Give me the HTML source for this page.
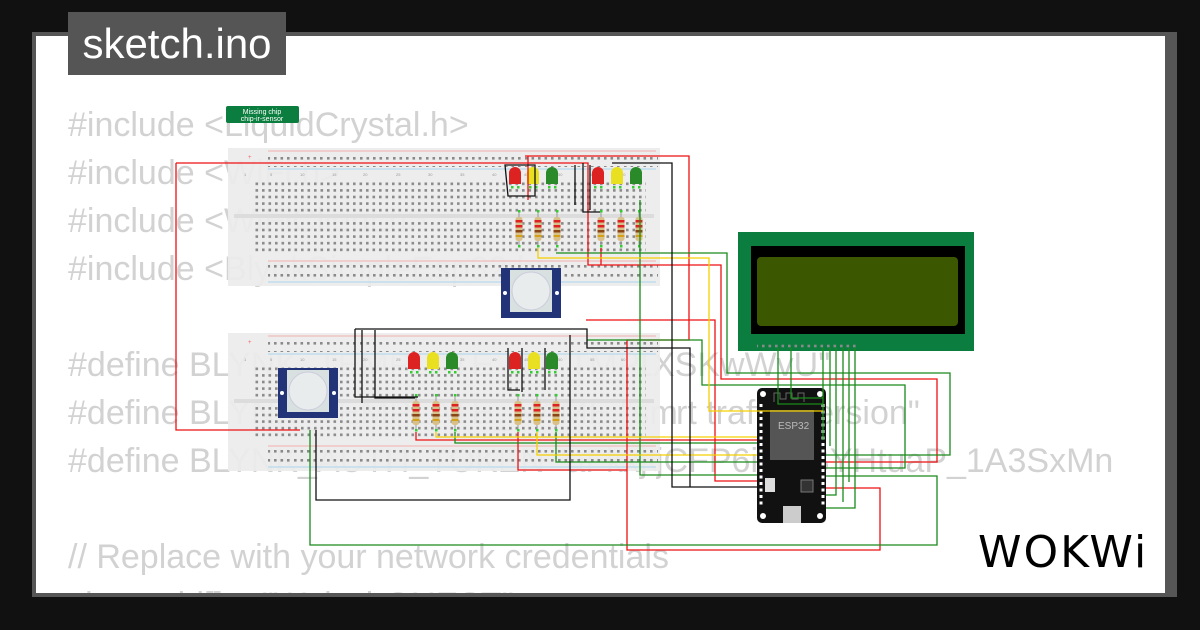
<!DOCTYPE html>
<html><head><meta charset="utf-8"><style>
html,body{margin:0;padding:0;background:#111;width:1200px;height:630px;overflow:hidden;font-family:"Liberation Sans",sans-serif}
.frame{position:absolute;left:32px;top:32px;width:1145px;height:565px;background:#565656}
.white{position:absolute;left:36px;top:36px;width:1129px;height:557px;background:#fff;overflow:hidden}
.tab{position:absolute;left:68px;top:12px;width:218px;height:63px;background:#555;color:#fff;font-size:42px;line-height:63px;text-align:center}
.code{position:absolute;color:#d2d2d2;font-size:34px;white-space:pre;line-height:48px}
.ov{right:0;background:#fff;height:48px;overflow:hidden}
svg{position:absolute;left:0;top:0}
</style></head><body>
<div class="frame"></div>
<div class="white">
<div class="code" style="left:32px;top:65px">#include &lt;LiquidCrystal.h&gt;
#include &lt;WiFi.h&gt;
#include &lt;WiFiClient.h&gt;
#include &lt;BlynkSimpleEsp32.h&gt;

#define BLYNK_TEMPLATE_ID "TMPL6XSKwWvU"
#define BLYNK_TEMPLATE_NAME "smart traffic version"
#define BLYNK_AUTH_TOKEN "aFkxjCFP6iXQBYHtuaP_1A3SxMn"

// Replace with your network credentials
char ssid[] = "Wokwi-GUEST";</div>
<div class="code ov" style="left:616px;top:305px">XSKwWvU"</div>
<div class="code ov" style="left:640px;top:353px">rt traffic version"</div>
<div class="code ov" style="left:620px;top:401px">jCFP6iXQBYHtuaP_1A3SxMn</div>
</div>
<div class="tab">sketch.ino</div>
<svg width="1200" height="630" viewBox="0 0 1200 630">
<defs>
<pattern id="h" width="6.5" height="6.6" patternUnits="userSpaceOnUse"><rect x="1.5" y="1.5" width="2.6" height="2.6" fill="#8a8a8a"/></pattern>
<pattern id="r" width="33" height="9" patternUnits="userSpaceOnUse"><g fill="#8a8a8a"><rect x="0" y="0" width="2.6" height="2.6"/><rect x="6.5" y="0" width="2.6" height="2.6"/><rect x="13" y="0" width="2.6" height="2.6"/><rect x="19.5" y="0" width="2.6" height="2.6"/><rect x="26" y="0" width="2.6" height="2.6"/></g></pattern>
<g id="bb">
<rect x="0" y="0" width="432" height="138" fill="#ececec" opacity="0.93"/>
<line x1="40" y1="3" x2="428" y2="3" stroke="#f2b0b0"/>
<line x1="40" y1="21" x2="428" y2="21" stroke="#a9d8ee"/>
<rect x="40" y="7" width="390" height="12" fill="url(#r)"/>
<rect x="26" y="31" width="392" height="33" fill="url(#h)"/>
<rect x="6" y="66" width="420" height="4" fill="#dcdcdc"/>
<rect x="26" y="73" width="392" height="33" fill="url(#h)"/>
<line x1="40" y1="113" x2="428" y2="113" stroke="#f2b0b0"/>
<rect x="40" y="117" width="390" height="12" fill="url(#r)"/>
<line x1="40" y1="134" x2="428" y2="134" stroke="#a9d8ee"/>
<text x="20" y="11" font-size="6" fill="#e66">+</text>
<g font-size="4" fill="#999"><text x="16" y="28">1</text><text x="42" y="28">5</text><text x="72" y="28">10</text><text x="104" y="28">15</text><text x="135" y="28">20</text><text x="168" y="28">25</text><text x="200" y="28">30</text><text x="232" y="28">35</text><text x="264" y="28">40</text><text x="296" y="28">45</text><text x="330" y="28">50</text><text x="362" y="28">55</text><text x="393" y="28">60</text></g>
</g>
<g id="led"><path d="M-6,-3 a6,6 0 0 1 12,0 v11 h-12z"/><rect x="-4" y="10" width="2.5" height="2.5" fill="#3c3"/><rect x="2" y="10" width="2.5" height="2.5" fill="#3c3"/></g>
<g id="res"><line x1="0" y1="-6" x2="0" y2="28" stroke="#999"/><rect x="-3.5" y="0" width="7" height="24" rx="2.5" fill="#d8c08a"/><rect x="-3.5" y="3" width="7" height="2.5" fill="#d22"/><rect x="-3.5" y="8" width="7" height="2.5" fill="#d22"/><rect x="-3.5" y="13" width="7" height="2.5" fill="#8b4513"/><rect x="-3.5" y="18" width="7" height="2" fill="#d4a017"/><rect x="-1" y="-7" width="2.5" height="2.5" fill="#3c3"/><rect x="-1" y="28" width="2.5" height="2.5" fill="#3c3"/></g>
<g id="pir"><rect x="0" y="0" width="60" height="50" fill="#223377"/><rect x="9" y="2" width="42" height="42" fill="#d8e0e0"/><circle cx="30" cy="23" r="19" fill="#e8ecec" stroke="#ccd" /><circle cx="4" cy="25" r="2" fill="#fff"/><circle cx="56" cy="25" r="2" fill="#fff"/></g>
</defs>
<use href="#bb" x="228" y="148"/>
<use href="#bb" x="228" y="333"/>
<g fill="#d22"><use href="#led" x="515" y="176"/><use href="#led" x="598" y="176"/><use href="#led" x="414" y="361"/><use href="#led" x="515" y="361"/></g>
<g fill="#e8e020"><use href="#led" x="533" y="176"/><use href="#led" x="617" y="176"/><use href="#led" x="433" y="361"/><use href="#led" x="534" y="361"/></g>
<g fill="#2a8a2a"><use href="#led" x="552" y="176"/><use href="#led" x="636" y="176"/><use href="#led" x="452" y="361"/><use href="#led" x="552" y="361"/></g>
<use href="#res" x="519" y="217"/><use href="#res" x="538" y="217"/><use href="#res" x="557" y="217"/>
<use href="#res" x="601" y="217"/><use href="#res" x="621" y="217"/><use href="#res" x="639" y="217"/>
<use href="#res" x="416" y="401"/><use href="#res" x="436" y="401"/><use href="#res" x="455" y="401"/>
<use href="#res" x="518" y="401"/><use href="#res" x="537" y="401"/><use href="#res" x="556" y="401"/>
<use href="#pir" x="501" y="268"/>
<use href="#pir" x="278" y="368"/>
<rect x="226" y="106" width="73" height="17" rx="2" fill="#0b7d3e"/>
<text x="262" y="114" font-size="7" fill="#fff" text-anchor="middle">Missing chip</text>
<text x="262" y="121" font-size="7" fill="#fff" text-anchor="middle">chip-ir-sensor</text>
<rect x="738" y="232" width="236" height="119" fill="#0b7d3e"/>
<rect x="751" y="246" width="214" height="88" fill="#000"/>
<rect x="757" y="257" width="201" height="69" rx="4" fill="#3b5700"/>
<rect x="757" y="344" width="100" height="4" fill="url(#h)"/>
<rect x="757" y="388" width="69" height="135" rx="5" fill="#111"/>
<rect x="770" y="410" width="44" height="50" fill="#555"/>
<text x="778" y="429" font-size="10" fill="#bbb">ESP32</text>
<path d="M774,402 v-9 h6 v6 h6 v-6 h6 v6 h6 v-6 h6 v9" stroke="#666" fill="none"/>
<g stroke="#fff" stroke-width="3" fill="none" stroke-dasharray="3,3.5"><line x1="761" y1="404" x2="761" y2="508"/><line x1="823" y1="404" x2="823" y2="508"/></g>
<rect x="783" y="506" width="18" height="17" fill="#ccc"/>
<rect x="765" y="478" width="10" height="14" fill="#ddd"/><rect x="801" y="480" width="12" height="12" fill="#333" stroke="#777"/>
<circle cx="763" cy="394" r="3" fill="#fff"/><circle cx="820" cy="394" r="3" fill="#fff"/><circle cx="763" cy="516" r="3" fill="#fff"/><circle cx="820" cy="516" r="3" fill="#fff"/>
<g fill="none" stroke-width="1.3">
<g stroke="#e11">
<path d="M176,163 H588 V265 H721 V379 H937 V462 H826"/>
<path d="M176,163 V430 H300"/>
<path d="M525,156 H689 V340 H627 V550 H880 V488 H826"/>
<path d="M528,156 V200"/>
<path d="M586,320 H715 V481 H757"/>
<path d="M416,432 V440 H757"/>
<path d="M518,432 V470 H627"/>
<path d="M601,248 V265"/>
</g>
<g stroke="#1a8a1a">
<path d="M310,430 V545 H937 V476 H826"/>
<path d="M556,253 H727 V373 H950 V455 H826"/>
<path d="M640,200 V475 H757"/>
<path d="M455,432 V443 H757"/>
<path d="M556,432 V462 H757"/>
<path d="M587,340 H702 V385 H905 V468 H826"/>
<path d="M823,348 V440 M830,348 V446 M836,348 V495 H826 M843,348 V502 M849,348 V482 M855,348 V508 H826"/>
<path d="M778,348 V404 H823 M791,348 V398 H823"/>
</g>
<g stroke="#f5d000"><path d="M538,248 V258 H709 V411 H823"/><path d="M436,432 V437 H757"/><path d="M537,432 V455 H757"/></g>
<g stroke="#111">
<path d="M316,430 V500 H570 V335"/>
<path d="M612,163 H672 V487 H757"/>
<path d="M355,329 H587 V348 H690 V487"/>
<path d="M355,329 V397 H418 M362,330 V403 M375,330 V398 H415"/>
<path d="M505,165 H535 V196 H508 Z M583,163 V212 H600 M590,165 V210 M575,165 V205"/>
<path d="M508,348 V390 H520 M522,348 V392 M545,348 V390"/>
</g>
</g>
<text x="978" y="567" font-size="44" font-family="DejaVu Sans,sans-serif" fill="#000" letter-spacing="2">WOKWi</text>
</svg>
</body></html>
